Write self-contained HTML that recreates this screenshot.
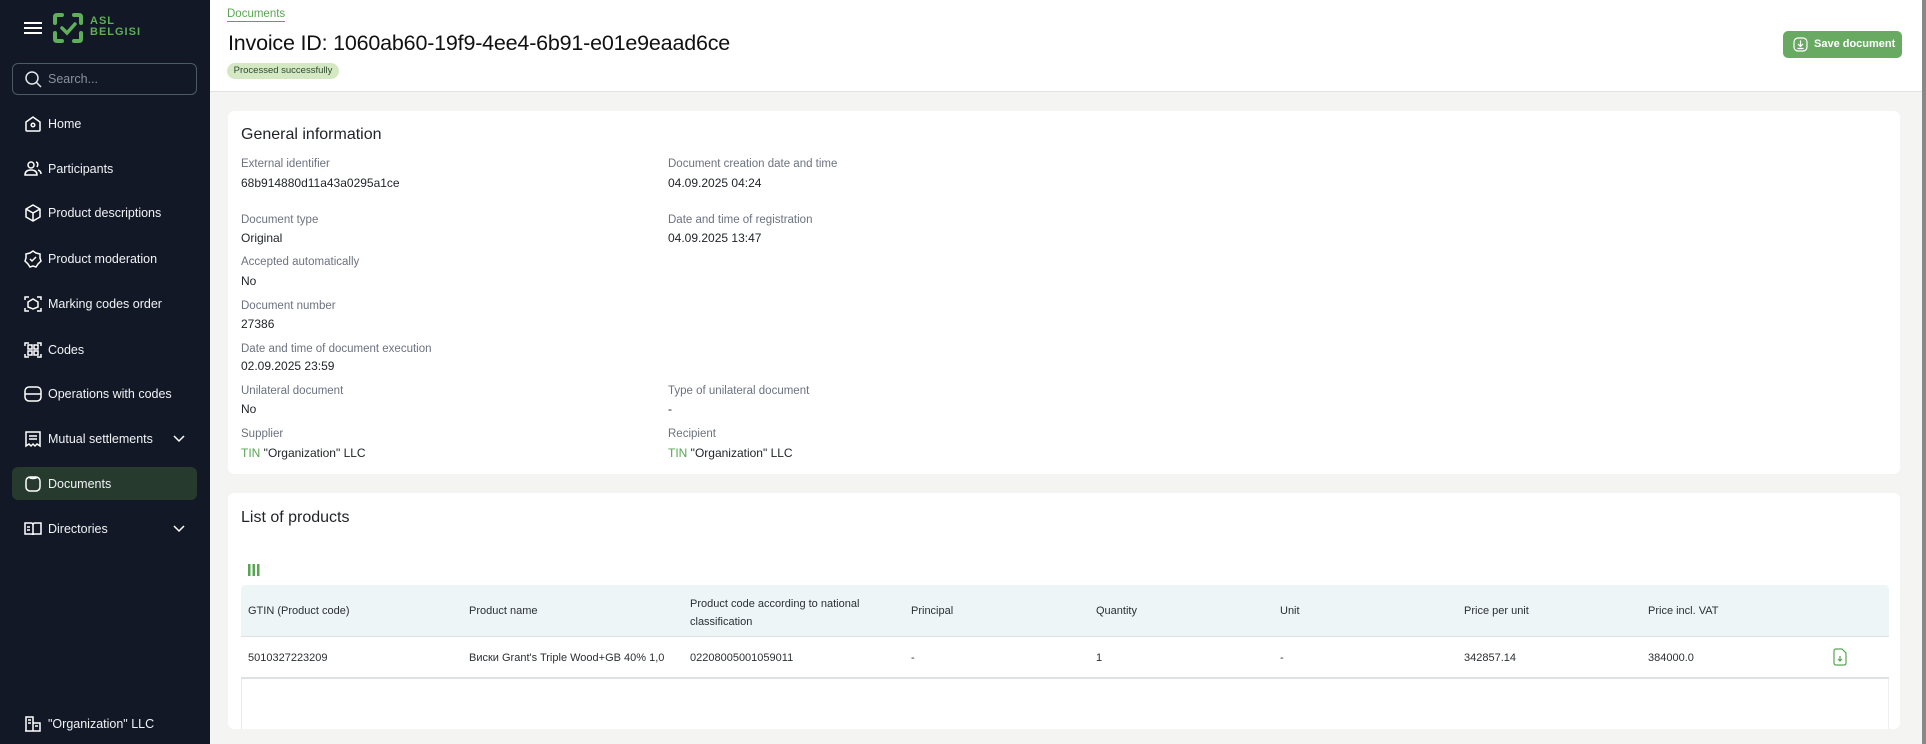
<!DOCTYPE html>
<html><head><meta charset="utf-8"><style>
*{box-sizing:border-box;margin:0;padding:0}
body{width:1926px;height:744px;overflow:hidden;font-family:"Liberation Sans",sans-serif;background:#f4f4f3;position:relative;color:#1f2328}
.sb{position:absolute;left:0;top:0;width:210px;height:744px;background:#121826;color:#f1f3f5}
.abs{position:absolute}
.nav{position:absolute;left:12px;width:185px;height:33px;font-size:12.5px;display:flex;align-items:center;padding-left:36px;border-radius:6px}
.nav svg{position:absolute;left:12px;top:8px}
.nav.act{background:#263a2e}
.nav svg.chev{left:auto;right:12px;top:13px}
.hdr{position:absolute;left:210px;top:0;width:1712px;height:92px;background:#fff;border-bottom:1px solid #e1e3e5}
.card{position:absolute;left:228px;width:1672px;background:#fff;border-radius:6px}
.lb{position:absolute;font-size:11.5px;color:#6b7280}
.vl{position:absolute;font-size:12px;color:#1f2328}
.th{position:absolute;font-size:11px;color:#2b2f33}
.td{position:absolute;font-size:11px;color:#2b2f33}
</style></head><body>
<div class="sb">
 <svg class="abs" style="left:24px;top:21px" width="18" height="14"><g stroke="#fff" stroke-width="2"><path d="M0 2H18M0 7H18M0 12H18"/></g></svg>
 <svg class="abs" style="left:52px;top:12px" width="32" height="32" fill="none" stroke="#5fae59" stroke-width="4" stroke-linecap="round"><path d="M3 11V5Q3 3 5 3H10M22 3H27Q29 3 29 5V11M29 21V27Q29 29 27 29H22M10 29H5Q3 29 3 27V21"/><path d="M10 16L15 21L23 12" stroke-width="3.5"/></svg>
 <div class="abs" style="left:90px;top:16px;color:#5fae59;font-weight:bold;font-size:11px;line-height:11px;letter-spacing:1px">ASL<br>BELGISI</div>
 <div class="abs" style="left:12px;top:63px;width:185px;height:32px;border:1px solid #4a5a66;border-radius:6px"></div>
 <svg class="abs" style="left:25px;top:71px" width="17" height="17" fill="none" stroke="#e5e7eb" stroke-width="1.5"><circle cx="7" cy="7" r="6"/><path d="M11.5 11.5L16 16"/></svg>
 <div class="abs" style="left:48px;top:72px;font-size:12.5px;color:#8a929b">Search...</div>
 <div class="nav" style="top:107px"><svg width="18" height="18" fill="none" stroke="#fff" stroke-width="1.5"><path d="M2 7L9 2L16 7V15Q16 16 15 16H3Q2 16 2 15Z"/><circle cx="9" cy="10" r="1.8"/></svg>Home</div>
 <div class="nav" style="top:152px"><svg width="18" height="18" fill="none" stroke="#fff" stroke-width="1.5"><circle cx="7" cy="5" r="3"/><path d="M1 15Q1 10 7 10Q13 10 13 15Z"/><path d="M12 2Q15 3 13 7M14 10Q17 11 17 14"/></svg>Participants</div>
 <div class="nav" style="top:196px"><svg width="18" height="18" fill="none" stroke="#fff" stroke-width="1.5"><path d="M9 1L16 5V13L9 17L2 13V5ZM2 5L9 9L16 5M9 9V17"/></svg>Product descriptions</div>
 <div class="nav" style="top:242px"><svg width="18" height="18" fill="none" stroke="#fff" stroke-width="1.5"><path d="M9 1L12 3L16 4L16 8L17 11L14 14L12 17L9 16L6 17L4 14L1 11L2 8L2 4L6 3Z"/><path d="M6 9L8 11L12 7"/></svg>Product moderation</div>
 <div class="nav" style="top:287px"><svg width="18" height="18" fill="none" stroke="#fff" stroke-width="1.5"><path d="M1 5V2H5M13 2H17V5M17 13V16H13M5 16H1V13"/><path d="M9 4L14 7V12L9 14L4 12V7Z"/></svg>Marking codes order</div>
 <div class="nav" style="top:333px"><svg width="18" height="18" fill="none" stroke="#fff" stroke-width="1.5"><path d="M1 5V2H5M13 2H17V5M17 13V16H13M5 16H1V13"/><rect x="4" y="4" width="4" height="4"/><rect x="10" y="4" width="4" height="4"/><rect x="4" y="10" width="4" height="4"/><rect x="10" y="10" width="4" height="4"/></svg>Codes</div>
 <div class="nav" style="top:377px"><svg width="18" height="18" fill="none" stroke="#fff" stroke-width="1.5"><rect x="1" y="2" width="16" height="14" rx="4"/><path d="M1 9H17"/></svg>Operations with codes</div>
 <div class="nav" style="top:422px"><svg width="18" height="18" fill="none" stroke="#fff" stroke-width="1.5"><path d="M2 2H16V16L13 14L11 16L9 14L7 16L5 14L2 16Z"/><path d="M5 6H13M5 9H13"/></svg>Mutual settlements<svg class="chev" width="12" height="8" fill="none" stroke="#fff" stroke-width="1.5"><path d="M1 1L6 6L11 1"/></svg></div>
 <div class="nav act" style="top:467px"><svg width="18" height="18" fill="none" stroke="#fff" stroke-width="1.5"><rect x="2" y="2" width="14" height="14" rx="4"/><path d="M4 2Q9 5 14 2"/></svg>Documents</div>
 <div class="nav" style="top:512px"><svg width="18" height="18" fill="none" stroke="#fff" stroke-width="1.5"><path d="M1 3H7Q9 3 9 5V15Q9 14 7 14H1ZM17 3H11Q9 3 9 5V15Q9 14 11 14H17Z"/><path d="M3 7H6M3 10H6"/></svg>Directories<svg class="chev" width="12" height="8" fill="none" stroke="#fff" stroke-width="1.5"><path d="M1 1L6 6L11 1"/></svg></div>
 <div class="nav" style="top:707px"><svg width="18" height="18" fill="none" stroke="#fff" stroke-width="1.5"><path d="M2 16V2H9V16M9 8H16V16H1"/><path d="M4 5H7M4 8H7M11 11H14"/></svg>"Organization" LLC</div>
</div>
<div class="hdr">
 <div class="abs" style="left:17px;top:8px;font-size:11.5px;color:#5aa454;border-bottom:1px solid #5aa454;line-height:13px">Documents</div>
 <div class="abs" style="left:18px;top:31px;font-size:21.5px;color:#111;letter-spacing:-0.2px">Invoice ID: 1060ab60-19f9-4ee4-6b91-e01e9eaad6ce</div>
 <div class="abs" style="left:17px;top:63px;width:112px;height:16px;border-radius:8px;background:#d4e8c4;font-size:9.5px;color:#2e4a2c;text-align:center;line-height:16px">Processed successfully</div>
 <div class="abs" style="left:1573px;top:31px;width:119px;height:27px;border-radius:5px;background:#69aa63;color:#fff;font-size:11px;font-weight:bold;line-height:27px;padding-left:31px">Save document
  <svg class="abs" style="left:10px;top:6px" width="15" height="15" fill="none" stroke="#fff" stroke-width="1.2"><rect x="1" y="1" width="13" height="13" rx="4"/><path d="M7.5 3.5V9M5 7L7.5 9.5L10 7M4.5 11.5H10.5"/></svg></div>
</div>
<div class="abs" style="left:1922px;top:0;width:4px;height:744px;background:#888"></div>
<div class="card" style="top:111px;height:363px">
 <div class="abs" style="left:13px;top:15px;font-size:16px;color:#1f2328">General information</div>
 <div class="lb" style="left:13px;top:47px">External identifier</div><div class="vl" style="left:13px;top:65px">68b914880d11a43a0295a1ce</div>
 <div class="lb" style="left:440px;top:47px">Document creation date and time</div><div class="vl" style="left:440px;top:65px">04.09.2025 04:24</div>
 <div class="lb" style="left:13px;top:103px">Document type</div><div class="vl" style="left:13px;top:120px">Original</div>
 <div class="lb" style="left:440px;top:103px">Date and time of registration</div><div class="vl" style="left:440px;top:120px">04.09.2025 13:47</div>
 <div class="lb" style="left:13px;top:145px">Accepted automatically</div><div class="vl" style="left:13px;top:163px">No</div>
 <div class="lb" style="left:13px;top:189px">Document number</div><div class="vl" style="left:13px;top:206px">27386</div>
 <div class="lb" style="left:13px;top:232px">Date and time of document execution</div><div class="vl" style="left:13px;top:248px">02.09.2025 23:59</div>
 <div class="lb" style="left:13px;top:274px">Unilateral document</div><div class="vl" style="left:13px;top:291px">No</div>
 <div class="lb" style="left:440px;top:274px">Type of unilateral document</div><div class="vl" style="left:440px;top:291px">-</div>
 <div class="lb" style="left:13px;top:317px">Supplier</div><div class="vl" style="left:13px;top:335px"><span style="color:#5aa454">TIN</span> "Organization" LLC</div>
 <div class="lb" style="left:440px;top:317px">Recipient</div><div class="vl" style="left:440px;top:335px"><span style="color:#5aa454">TIN</span> "Organization" LLC</div>
</div>
<div class="card" style="top:493px;height:236px">
 <div class="abs" style="left:13px;top:16px;font-size:16px">List of products</div>
 <svg class="abs" style="left:20px;top:71px" width="12" height="12" fill="#5aa454"><rect x="0" y="0" width="2.5" height="12"/><rect x="4.5" y="0" width="2.5" height="12"/><rect x="9" y="0" width="2.5" height="12"/></svg>
 <div class="abs" style="left:13px;top:92px;width:1648px;height:52px;background:#eef5f7;border-bottom:1px solid #dde1e4;border-radius:4px 4px 0 0"></div>
 <div class="abs" style="left:13px;top:184px;width:1648px;height:1px;border-top:2px solid #dde1e4"></div>
 <div class="abs" style="left:13px;top:186px;width:1px;height:50px;background:#e6e8ea"></div>
 <div class="abs" style="left:1660px;top:186px;width:1px;height:50px;background:#eef0f1"></div>
 <div class="th" style="left:20px;top:112px">GTIN (Product code)</div>
 <div class="th" style="left:241px;top:112px">Product name</div>
 <div class="th" style="left:462px;top:102px;line-height:18px">Product code according to national<br>classification</div>
 <div class="th" style="left:683px;top:112px">Principal</div>
 <div class="th" style="left:868px;top:112px">Quantity</div>
 <div class="th" style="left:1052px;top:112px">Unit</div>
 <div class="th" style="left:1236px;top:112px">Price per unit</div>
 <div class="th" style="left:1420px;top:112px">Price incl. VAT</div>
 <div class="td" style="left:20px;top:159px">5010327223209</div>
 <div class="td" style="left:241px;top:159px">Виски Grant's Triple Wood+GB 40% 1,0</div>
 <div class="td" style="left:462px;top:159px">02208005001059011</div>
 <div class="td" style="left:683px;top:159px">-</div>
 <div class="td" style="left:868px;top:159px">1</div>
 <div class="td" style="left:1052px;top:159px">-</div>
 <div class="td" style="left:1236px;top:159px">342857.14</div>
 <div class="td" style="left:1420px;top:159px">384000.0</div>
 <svg class="abs" style="left:1605px;top:155px" width="14" height="18" fill="none" stroke="#5aa454" stroke-width="1.2"><path d="M1 3Q1 1 3 1H9L13 5V15Q13 17 11 17H3Q1 17 1 15Z"/><path d="M7 8V13M5 11L7 13L9 11"/></svg>
</div>
</body></html>
